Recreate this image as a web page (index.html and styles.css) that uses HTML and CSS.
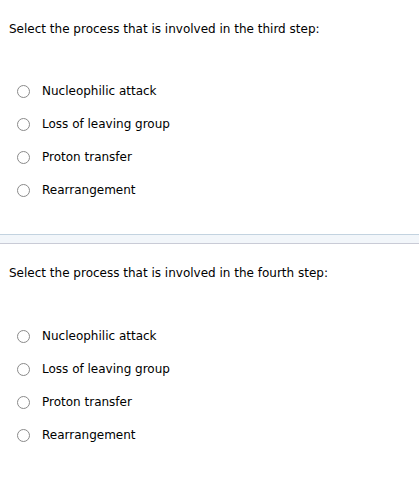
FILE: index.html
```html
<!DOCTYPE html>
<html>
<head>
<meta charset="utf-8">
<link rel="stylesheet" href="styles.css">
</head>
<body>
<div class="question">
  <p class="prompt">Select the process that is involved in the third step:</p>
  <ul class="options">
    <li class="option"><span class="radio"></span><span>Nucleophilic attack</span></li>
    <li class="option"><span class="radio"></span><span>Loss of leaving group</span></li>
    <li class="option"><span class="radio"></span><span>Proton transfer</span></li>
    <li class="option"><span class="radio"></span><span>Rearrangement</span></li>
  </ul>
</div>
<div class="divider"></div>
<div class="question second">
  <p class="prompt">Select the process that is involved in the fourth step:</p>
  <ul class="options">
    <li class="option"><span class="radio"></span><span>Nucleophilic attack</span></li>
    <li class="option"><span class="radio"></span><span>Loss of leaving group</span></li>
    <li class="option"><span class="radio"></span><span>Proton transfer</span></li>
    <li class="option"><span class="radio"></span><span>Rearrangement</span></li>
  </ul>
</div>
</body>
</html>
```
FILE: styles.css
```css
html, body {
  margin: 0;
  padding: 0;
  background: #fff;
}
body {
  font-family: "DejaVu Sans", Verdana, sans-serif;
  font-size: 12px;
  color: #000;
}
.question {
  padding: 0 9px;
}
.prompt {
  margin: 0;
  padding-top: 21px;
  line-height: 16px;
}
.options {
  list-style: none;
  margin: 0;
  padding: 46px 0 0 8px;
  display: flex;
  flex-direction: column;
  gap: 17px;
}
.second .options {
  padding-top: 47px;
}
.option {
  display: flex;
  align-items: center;
  gap: 12px;
  height: 16px;
  line-height: 16px;
}
.radio {
  width: 11px;
  height: 11px;
  border: 1px solid #8a8a8a;
  border-radius: 50%;
  background: #fff;
  flex: none;
}
.divider {
  margin-top: 36px;
  height: 8px;
  background: #f2f6fa;
  border-top: 1px solid #c3d3e0;
  border-bottom: 1px solid #c9cbd6;
}
```
